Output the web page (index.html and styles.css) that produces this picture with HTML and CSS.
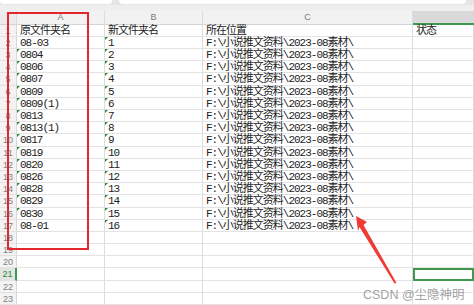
FILE: index.html
```html
<!DOCTYPE html>
<html lang="zh-CN">
<head>
<meta charset="utf-8">
<title>sheet</title>
<link rel="stylesheet" href="styles.css">
</head>
<body>
<div class="page">
  <div class="topbar"><div class="pill pill-a"></div><div class="pill pill-b"></div></div>
  <div class="strip"></div>
  <div class="sheet">
    <div class="hc corner"></div><div class="hc">A</div><div class="hc">B</div><div class="hc">C</div><div class="hc hc-sel"></div>

    <div class="rn">1</div><div class="c">原文件夹名</div><div class="c">新文件夹名</div><div class="c">所在位置</div><div class="c">状态</div>
    <div class="rn">2</div><div class="c">08-03</div><div class="c w">1</div><div class="c">F:\小说推文资料\2023-08素材\</div><div class="c"></div>
    <div class="rn">3</div><div class="c w">0804</div><div class="c w">2</div><div class="c">F:\小说推文资料\2023-08素材\</div><div class="c"></div>
    <div class="rn">4</div><div class="c w">0806</div><div class="c w">3</div><div class="c">F:\小说推文资料\2023-08素材\</div><div class="c"></div>
    <div class="rn">5</div><div class="c w">0807</div><div class="c w">4</div><div class="c">F:\小说推文资料\2023-08素材\</div><div class="c"></div>
    <div class="rn">6</div><div class="c w">0809</div><div class="c w">5</div><div class="c">F:\小说推文资料\2023-08素材\</div><div class="c"></div>
    <div class="rn">7</div><div class="c w">0809(1)</div><div class="c w">6</div><div class="c">F:\小说推文资料\2023-08素材\</div><div class="c"></div>
    <div class="rn">8</div><div class="c w">0813</div><div class="c w">7</div><div class="c">F:\小说推文资料\2023-08素材\</div><div class="c"></div>
    <div class="rn">9</div><div class="c w">0813(1)</div><div class="c w">8</div><div class="c">F:\小说推文资料\2023-08素材\</div><div class="c"></div>
    <div class="rn">10</div><div class="c w">0817</div><div class="c w">9</div><div class="c">F:\小说推文资料\2023-08素材\</div><div class="c"></div>
    <div class="rn">11</div><div class="c w">0819</div><div class="c w">10</div><div class="c">F:\小说推文资料\2023-08素材\</div><div class="c"></div>
    <div class="rn">12</div><div class="c w">0820</div><div class="c w">11</div><div class="c">F:\小说推文资料\2023-08素材\</div><div class="c"></div>
    <div class="rn">13</div><div class="c w">0826</div><div class="c w">12</div><div class="c">F:\小说推文资料\2023-08素材\</div><div class="c"></div>
    <div class="rn">14</div><div class="c w">0828</div><div class="c w">13</div><div class="c">F:\小说推文资料\2023-08素材\</div><div class="c"></div>
    <div class="rn">15</div><div class="c w">0829</div><div class="c w">14</div><div class="c">F:\小说推文资料\2023-08素材\</div><div class="c"></div>
    <div class="rn">16</div><div class="c w">0830</div><div class="c w">15</div><div class="c">F:\小说推文资料\2023-08素材\</div><div class="c"></div>
    <div class="rn">17</div><div class="c">08-01</div><div class="c w">16</div><div class="c">F:\小说推文资料\2023-08素材\</div><div class="c"></div>
    <div class="rn">18</div><div class="c"></div><div class="c"></div><div class="c"></div><div class="c"></div>
    <div class="rn">19</div><div class="c"></div><div class="c"></div><div class="c"></div><div class="c"></div>
    <div class="rn">20</div><div class="c"></div><div class="c"></div><div class="c"></div><div class="c"></div>
    <div class="rn rn-sel">21</div><div class="c"></div><div class="c"></div><div class="c"></div><div class="c cell-sel"></div>
    <div class="rn">22</div><div class="c"></div><div class="c"></div><div class="c"></div><div class="c"></div>
    <div class="rn">23</div><div class="c"></div><div class="c"></div><div class="c"></div><div class="c"></div>
  </div>

  <div class="redbox"></div>
  <svg class="arrow" width="474" height="305" viewBox="0 0 474 305">
    <polygon points="356,216 367,222 363.5,225 396.5,283 394.5,283.5 359.5,227 358,231" fill="#ef3b36"/>
  </svg>
  <div class="watermark">CSDN @尘隐神明</div>
</div>
</body>
</html>
```
FILE: styles.css
```css
html, body {
  margin: 0;
  padding: 0;
  background: #ffffff;
  overflow: hidden;
}

.page {
  position: relative;
  width: 474px;
  height: 305px;
  overflow: hidden;
  font-family: "Liberation Mono", "Noto Sans CJK SC", monospace;
}

.topbar {
  height: 5px;
  background: #e6e6e6;
  display: flex;
  gap: 7px;
}

.pill {
  background: #ffffff;
  height: 4px;
  border-radius: 0 0 4px 4px;
}

.pill-a { width: 112px; }
.pill-b { width: 347px; }

.strip {
  height: 6px;
  background: #eeeeee;
}

.sheet {
  display: grid;
  grid-template-columns: 17px 88px 98px 210px 61px;
  grid-template-rows: 13.7px repeat(23, 12.2px);
}

.hc {
  background: #f2f2f2;
  border-right: 1px solid #dcdcdc;
  border-bottom: 1px solid #d4d4d4;
  box-sizing: border-box;
  font-family: "Liberation Sans", "Noto Sans", sans-serif;
  font-size: 9px;
  color: #7a7a7a;
  text-align: center;
  line-height: 12px;
}

.corner {
  background: #ececec;
}

.hc-sel {
  background: #d9d9d9;
  border-bottom: 2px solid #3f9a4e;
  border-right: none;
}

.rn {
  background: #f3f3f3;
  border-right: 1px solid #d8d8d8;
  border-bottom: 1px solid #e2e2e2;
  box-sizing: border-box;
  font-family: "Liberation Sans", "Noto Sans", sans-serif;
  font-size: 9px;
  color: #808080;
  text-align: center;
  line-height: 12px;
}

.rn-sel {
  background: #e3e3e3;
  color: #2f8a42;
  border-right: 2px solid #3f9a4e;
}

.c {
  position: relative;
  border-right: 1px solid #dcdcdc;
  border-bottom: 1px solid #e3e3e3;
  box-sizing: border-box;
  font-size: 11px;
  letter-spacing: -1px;
  line-height: 12px;
  color: #222222;
  padding-left: 3px;
  white-space: nowrap;
  overflow: visible;
}

.w::before {
  content: "";
  position: absolute;
  left: 0;
  top: 0;
  width: 0;
  height: 0;
  border-top: 3px solid #2e8b3c;
  border-right: 3px solid transparent;
}

.cell-sel {
  border: 2px solid #3f9a4e;
}

.redbox {
  position: absolute;
  left: 7px;
  top: 12px;
  width: 82px;
  height: 238px;
  box-sizing: border-box;
  border: 2px solid #e3262b;
}

.arrow {
  position: absolute;
  left: 0;
  top: 0;
}

.watermark {
  position: absolute;
  left: 363px;
  top: 284px;
  font-family: "Liberation Sans", "Noto Sans CJK SC", sans-serif;
  font-size: 12.5px;
  color: rgba(130, 130, 130, 0.75);
  white-space: nowrap;
}
```
